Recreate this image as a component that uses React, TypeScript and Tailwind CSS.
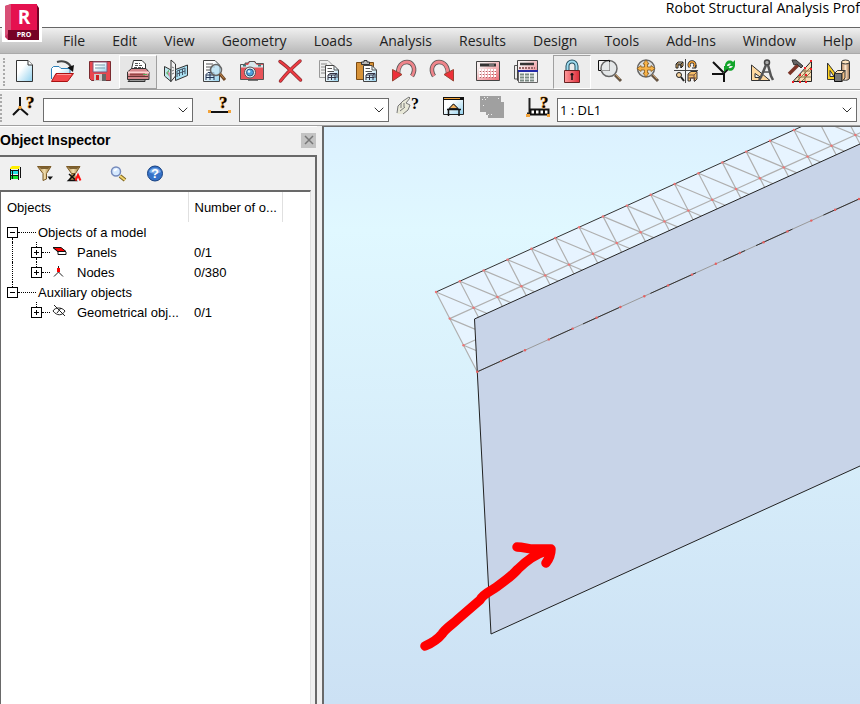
import { ReactNode, useState } from "react";
import { ChevronDown } from "lucide-react";

const MENUS = [
  "File", "Edit", "View", "Geometry", "Loads", "Analysis", "Results",
  "Design", "Tools", "Add-Ins", "Window", "Help",
];

const page = (
  <>
    <path d="M4.5 1.5H16L20.500 6V22.500H4.500Z" fill="url(#paper)" stroke="#333" />
    <path d="M16 1.500V6H20.500" fill="#fff" stroke="#333" />
  </>
);

const miniPage = (
  <>
    <path d="M9.500 6.500H18L22.500 11V22.500H9.500Z" fill="url(#paper)" stroke="#444" />
    <path d="M18 6.500V11H22.500M11.500 9.500H16M11.500 12.500H18" fill="none" stroke="#555" />
    <path d="M12 21V16L14 14.500H21L19 16V21M12 16H19M12 18.500H20M15.500 16V21M21 14.500V19" fill="none" stroke="#334" />
  </>
);

const calculator = (
  <>
    <path d="M.500 2.500H23.500V21.500H.500Z" fill="url(#rose)" stroke="#444" />
    <path d="M4 6H20" stroke="#333" strokeWidth="3" />
    <path d="M13 6H18" stroke="#aaa" />
    <path d="M3 11H21M3 14H21M3 17H21" stroke="#fff" strokeWidth="2" strokeDasharray="2 1" />
    <path d="M4 12.500H21M4 15.500H21M4 18.500H21" stroke="#a66" strokeDasharray="1 2" />
  </>
);

const triangleRule = (
  <path fillRule="evenodd" d="M1.500 6V21.500H20ZM5 14.500V18.500H11Z" fill="#ffd9a0" stroke="#333" />
);

const question = (
  <text x="14" y="13" fontFamily="Liberation Serif, serif" fontWeight="bold" fontSize="17" fill="#000" stroke="#f2a33a" strokeWidth="1" paintOrder="stroke">?</text>
);

const ICONS: Record<string, ReactNode> = {
  New: page,
  Open: (
    <>
      <path d="M1.500 20V9.500L3.500 7.500H9L11 9.500H20V16" fill="url(#paper)" stroke="#2a7fb8" />
      <path d="M6 14.500H23.500L17.500 22.500H1.500Z" fill="#f3474b" stroke="#a11" />
      <path d="M7 15.500H21" stroke="#ff9a9a" />
      <path d="M7 3C13 1 19 3 21.500 9" fill="none" stroke="#444" strokeWidth="2" />
      <path d="M17.500 8.500L24 6L23 13Z" fill="#111" />
    </>
  ),
  Save: (
    <>
      <path d="M1.500 2.500H22.500V21.500H3.500L1.500 19.500Z" fill="#e9474f" stroke="#7b2b30" />
      <path d="M5 3H19V13H5Z" fill="url(#paper)" stroke="#857" />
      <path d="M7 6H17M7 9H17" stroke="#79a" />
      <path d="M6 15H18V22H6Z" fill="#ccc" />
      <path d="M8 16H11V21H8Z" fill="#c22" />
      <path d="M14 15H18V22H14Z" fill="#666" />
    </>
  ),
  Print: (
    <>
      <path d="M5.500 10L7.500 1.500H16L19.500 5V10Z" fill="#fff" stroke="#333" />
      <path d="M9 4.500H14M9 6.500H16M8 8.500H17" stroke="#555" strokeDasharray="3 1" />
      <path d="M1.500 13L5.500 9.500H20L23 13V20.500H1.500Z" fill="#d5888c" stroke="#333" />
      <path d="M2 13.500H23" stroke="#ffd3d3" strokeWidth="2" />
      <path d="M2 17.500H22" stroke="#633" />
      <path d="M4 20.500H19V22.500H2Z" fill="#999" stroke="#333" />
      <path d="M4 15.500H19" stroke="#944" strokeWidth="2" />
      <path d="M17 15.500H21" stroke="#5a5" />
    </>
  ),
  "Print Composition": (
    <>
      <path d="M.500 7.500L7 11V22.500L.500 17Z" fill="#bfe8ee" stroke="#333" />
      <path d="M2 14L5 10.500V17Z" fill="#5bc069" />
      <path d="M3 12L6 14V19Z" fill="#df8fb4" />
      <path d="M7 1L11.500 5V17L7 22.500Z" fill="#f3f3f3" stroke="#333" />
      <path d="M8 8L10 9M8 12L10 11M8 15L10 14" stroke="#777" />
      <path d="M11.500 10.500L23.500 6V16.500L11.500 21.500Z" fill="#a9dff0" stroke="#333" />
      <path d="M13 18V12L21 9V15M13 15L21 12M15.500 11V17M18.500 10V16" fill="none" stroke="#456" />
    </>
  ),
  Preview: (
    <>
      <path d="M1.500 1.500H13L17.500 6V22.500H1.500Z" fill="url(#paper)" stroke="#444" />
      <path d="M4 5H11M4 8H13M4 11H9" stroke="#555" />
      <path d="M4 21V15.500L6 13.500H12V21M4 16H12M4 18.500H12M8 14V21" fill="none" stroke="#235" />
      <circle cx="14" cy="11" r="5.500" fill="#bde3f4" fillOpacity=".75" stroke="#666" strokeWidth="1.500" />
      <path d="M18 15L23 21" stroke="#6d4524" strokeWidth="3" />
      <path d="M18 14.500L22 19.500" stroke="#c78b4e" />
    </>
  ),
  "Screen Capture": (
    <>
      <path d="M.500 5.500H5V4H8L9 2.500H15L16 4.500H23.500V20.500H.500Z" fill="#e8545a" stroke="#555" />
      <path d="M1 6H8L10 3H14L17 6H23V8.500H1Z" fill="#d6e9ee" />
      <path d="M3 6.500H6M18 6.500H21" stroke="#477" strokeWidth="2" />
      <circle cx="10" cy="13.500" r="5.500" fill="#e9eef2" stroke="#555" />
      <circle cx="10" cy="13.500" r="3.500" fill="#4f9fdb" stroke="#27567d" />
      <circle cx="9" cy="12.500" r="1.300" fill="#dff6ff" />
      <path d="M8 21.500H18" stroke="#777" />
    </>
  ),
  Delete: (
    <>
      <path d="M2 2.500C9 7 15 14 22.500 21M22 2C14 9 7 16 2.500 22" fill="none" stroke="#8e3035" strokeWidth="3.500" strokeLinecap="round" />
      <path d="M2 2.500C9 7 15 14 22.500 21M22 2C14 9 7 16 2.500 22" fill="none" stroke="#ef3b42" strokeWidth="2" strokeLinecap="round" />
    </>
  ),
  Copy: (
    <>
      <path d="M3.500 1.500H12L16.500 6V18.500H3.500Z" fill="#eee" stroke="#999" />
      <path d="M5 5H11M5 8H9M5 11H9M5 14H9" stroke="#888" />
      {miniPage}
    </>
  ),
  Paste: (
    <>
      <path d="M2.500 3.500H19.500V20.500H2.500Z" fill="#d79238" stroke="#7b4a12" />
      <path d="M7.500 5.500V3H10V1.500H13V3H15.500V5.500Z" fill="#bbb" stroke="#333" />
      {miniPage}
    </>
  ),
  Undo: (
    <>
      <path d="M6 15C6 7 10 3 15 3C20 3 25 9 20 17" fill="none" stroke="#555" strokeWidth="4.500" />
      <path d="M6 15C6 7 10 3 15 3C20 3 25 9 20 17" fill="none" stroke="#ef858b" strokeWidth="2.800" />
      <path d="M.500 10.500L10 15.500L.500 22Z" fill="#ee3039" stroke="#943" />
    </>
  ),
  Redo: (
    <>
      <path d="M18 15C18 7 14 3 9 3C4 3 -1 9 4 17" fill="none" stroke="#555" strokeWidth="4.500" />
      <path d="M18 15C18 7 14 3 9 3C4 3 -1 9 4 17" fill="none" stroke="#ef858b" strokeWidth="2.800" />
      <path d="M23.500 10.500L14 15.500L23.500 22Z" fill="#ee3039" stroke="#943" />
    </>
  ),
  Calculations: calculator,
  "Calculation Parameters": (
    <>
      <path d="M.500 6.500H17V20H.500Z" fill="#eee" stroke="#555" />
      <path d="M3.500 1.500H23.500V21.500H3.500Z" fill="url(#rose)" stroke="#444" />
      <path d="M6 5H20" stroke="#333" strokeWidth="2.500" />
      <path d="M5 9H21" stroke="#966" strokeWidth="2" strokeDasharray="2 1" />
      <path d="M4.500 12.500H23.500V23.500H4.500Z" fill="#f4f4f4" stroke="#666" />
      <path d="M4 12H24" stroke="#2429a8" strokeWidth="2" />
      <path d="M6 15.500H20M6 18.500H20M6 21.500H20" stroke="#7a8a83" strokeWidth="2" strokeDasharray="4 1" />
    </>
  ),
  "Structure Lock": (
    <>
      <path d="M7.500 12V7C7.500 1 16.500 1 16.500 7V12" fill="none" stroke="#234c5c" strokeWidth="4" />
      <path d="M7.500 12V7C7.500 1 16.500 1 16.500 7V12" fill="none" stroke="#9fdcf0" strokeWidth="2" />
      <path d="M4.500 11.500H19.500V23.500H4.500Z" fill="url(#lock)" stroke="#622" />
      <path d="M12 14V21M10.500 15.500H13.500" stroke="#111" strokeWidth="1.500" />
    </>
  ),
  "Zoom Window": (
    <>
      <circle cx="11" cy="9.500" r="8" fill="#e4e7e8" stroke="#666" strokeWidth="1.500" />
      <path d="M.500 1.500H11.500V11.500H.500Z" fill="none" stroke="#111" />
      <path d="M11.500 3V11.500H3" fill="none" stroke="#999" />
      <path d="M17 16L23 22" stroke="#654" strokeWidth="3" />
      <path d="M17.500 15.500L22 20" stroke="#c79b62" />
    </>
  ),
  "Zoom All": (
    <>
      <circle cx="10" cy="9.500" r="8.500" fill="#dde1e3" stroke="#666" strokeWidth="1.500" />
      <path d="M10 1L13 5H11.500V8H15V6.500L19 9.500L15 12.500V11H11.500V14H13L10 18L7 14H8.500V11H5V12.500L1 9.500L5 6.500V8H8.500V5H7Z" fill="#f7b348" stroke="#865b20" strokeWidth=".8" />
      <path d="M16 16L22 22" stroke="#654" strokeWidth="3" />
      <path d="M16.500 15.500L21 20" stroke="#c79b62" />
    </>
  ),
  "Dynamic View": (
    <>
      <path d="M0 11.500H24M11.500 0V24" stroke="#444" />
      <path d="M2 9V5L4 3H9V7L7 9V6H4V9ZM2 5H7L9 3M7 5V9" fill="#f6be68" stroke="#222" />
      <path d="M16 8A3 3 0 1 1 20 8" fill="none" stroke="#222" strokeWidth="3" />
      <path d="M16 8A3 3 0 1 1 20 8" fill="none" stroke="#f6a338" strokeWidth="1.500" />
      <path d="M18 9H22V6" fill="none" stroke="#222" />
      <circle cx="5" cy="16" r="2.500" fill="#f8d39b" stroke="#222" />
      <path d="M7 18L10 22" stroke="#222" strokeWidth="2" />
      <path d="M14 22V15L17 12.500H23V20L20.500 22.500V19H16.500V22Z" fill="#f6be68" stroke="#333" />
      <path d="M14 16H20L23 13M14 19H22M20 16V22" fill="none" stroke="#754" />
    </>
  ),
  Redraw: (
    <>
      <path d="M1 3L11.500 13.500M0 15H12V23M12 14L17 9" fill="none" stroke="#111" strokeWidth="2" />
      <path d="M13 7C13 2 18 0 21 3L23 1V7H17L19 5C17 4 15 5 15 7Z" fill="#12a52a" />
      <path d="M23 6C23 11 18 14 15 10L12 13V7H18L16 9C19 10 21 8 21 6Z" fill="#12a52a" />
    </>
  ),
  "Edit Structure": (
    <>
      {triangleRule}
      <circle cx="17" cy="3.500" r="2.500" fill="#aaa" stroke="#444" strokeWidth="1.500" />
      <path d="M16 6L11 18L9 21M18 6L21 17L23 21" fill="none" stroke="#555" strokeWidth="2.500" />
      <path d="M13 13H20" stroke="#555" strokeWidth="1.500" />
    </>
  ),
  "Structure Repair": (
    <>
      <path d="M5 22.500L23.500 2V22.500Z" fill="#f7ddb5" stroke="#222" />
      <path d="M9 18H23M15 12H23M11 16V22M17 9V22M9 22L23 8M14 22L23 13" stroke="#8b7448" fill="none" />
      <path d="M4 22H6V24H4ZM11 15H13V17H11ZM16 8H18V10H16ZM22 1H24V3H22ZM22 9H24V11H22ZM11 22H13V24H11ZM17 22H19V24H17ZM17 15H19V17H17Z" fill="#ef2026" />
      <path d="M1 15L11 5" stroke="#7b3427" strokeWidth="3.500" />
      <path d="M4 1L8 1L15 7L13 9L9 5L6 6Z" fill="#666" stroke="#333" />
    </>
  ),
  Tables: (
    <>
      <path fillRule="evenodd" d="M1.500 4V20.500H14ZM4 11.500V17.500H8Z" fill="#ffd21f" stroke="#333" />
      <path d="M15.500 3V19C15.500 22 23.500 22 23.500 19V3" fill="url(#wood)" stroke="#333" />
      <ellipse cx="19.500" cy="3" rx="4" ry="2" fill="#ffe3be" stroke="#333" />
      <path d="M8.500 14.500H16V22.500H8.500Z" fill="#777" stroke="#111" />
      <path d="M8.500 14.500L11.500 11.500H19L16 14.500Z" fill="#ffe1bc" stroke="#333" />
      <path d="M16 14.500L19 11.500V19L16 22.500Z" fill="#f4bf84" stroke="#333" />
    </>
  ),
  "Node Selection": (
    <>
      <path d="M8 2V13L1 20M8 13L16 20" fill="none" stroke="#111" strokeWidth="2" />
      <path d="M6.500 11H9.500V14H6.500Z" fill="#f2a33a" />
      {question}
    </>
  ),
  "Bar Selection": (
    <>
      <path d="M0 17H23" stroke="#111" strokeWidth="2" />
      <path d="M0 15H3V18H0ZM20 15H23V18H20Z" fill="#f2a33a" />
      <text x="11" y="13" fontFamily="Liberation Serif, serif" fontWeight="bold" fontSize="17" fill="#000" stroke="#f2a33a" strokeWidth="1" paintOrder="stroke">?</text>
    </>
  ),
  "Object Selection": (
    <>
      <path d="M1 19L2 11L7 6L13 2L14 3L10 8L14 10L12 15L8 19Z" fill="#e8e8d8" />
      <path d="M1 18L2 11L7 6L13 2L14 3L10 8M5 13V8M8 12V8M10 8L14 10L12 15L7 19M4 16L9 12" fill="none" stroke="#777" />
      <text x="15" y="14" fontFamily="Liberation Serif, serif" fontWeight="bold" fontSize="16">?</text>
    </>
  ),
  "View Selection": (
    <>
      <path d="M1.500 2.500H21.500V19.500H1.500Z" fill="url(#paper)" stroke="#222" />
      <path d="M1 3.500H22" stroke="#111" strokeWidth="3" />
      <path d="M2 3.500H18" stroke="#f2a33a" />
      <path d="M6.500 21V15L11.500 9.500L17 15V21M5 14.500H19" fill="none" stroke="#111" strokeWidth="1.500" />
      <path d="M7 13.500H16L11.500 9Z" fill="#f6b35d" stroke="#222" />
    </>
  ),
  "Attribute Selection": (
    <>
      <path d="M0 1H21V7H24V23H8V20H6V17H0Z" fill="#a0a0a0" />
      <path d="M2 4.500H8M4 2.500H10M3 10.500H5M8 19.500H12M18 3.500H20" stroke="#eee" strokeDasharray="1 2" />
    </>
  ),
  "Case Selection": (
    <>
      <path d="M3.500 3V18M1 18.500H22" stroke="#222" strokeWidth="2" />
      <path d="M4.500 14.500H22.500V19.500H4.500Z" fill="#fff" stroke="#111" strokeWidth="2" />
      <path d="M9 15V20M13.500 15V20M18 15V20" stroke="#111" strokeWidth="2" />
      <path d="M0 19H4V22H0ZM21 19H24V22H21Z" fill="#f2a33a" />
      {question}
    </>
  ),
};

const MAIN_TOOLS = [
  ["New", "Open", "Save", "Print", "Print Composition", "Preview", "Screen Capture", "Delete", "Copy", "Paste", "Undo", "Redo"],
  ["Calculations", "Calculation Parameters"],
  ["Structure Lock", "Zoom Window", "Zoom All", "Dynamic View", "Redraw", "Edit Structure", "Structure Repair", "Tables"],
];

function ToolButton({ name, disabled = false }: { name: string; disabled?: boolean }) {
  const look =
    name === "Print"
      ? "bg-[#e6e6e6] border-white border-r-[#a0a0a0] border-b-[#a0a0a0]"
      : name === "Structure Lock"
        ? "bg-[#ececec] border-[#a0a0a0] border-r-white border-b-white"
        : "border-transparent";
  return (
    <button
      type="button"
      aria-label={name}
      title={name}
      disabled={disabled}
      className={`flex h-[34px] w-[38px] shrink-0 justify-center border pt-[3px] ${look}`}
    >
      <svg viewBox="0 0 24 24" className="size-6 overflow-visible" aria-hidden="true">{ICONS[name]}</svg>
    </button>
  );
}

function Combo({ label, options, className }: { label: string; options: string[]; className: string }) {
  return (
    <div className={`relative mt-[3px] h-6 ${className}`}>
      <select
        aria-label={label}
        className="block h-full w-full appearance-none border border-[#6d6d6d] bg-white pl-0.5 font-['Open_Sans',sans-serif] text-[13px] leading-5 text-black outline-none"
      >
        {options.map((option) => (
          <option key={option}>{option}</option>
        ))}
      </select>
      <ChevronDown className="pointer-events-none absolute top-1 right-0.5 size-4 text-[#333]" strokeWidth={1.5} />
    </div>
  );
}

function Logo() {
  return (
    <div className="absolute top-0 left-0.5 z-10 bg-white pt-1 pr-[3px] pb-0.5 pl-[3px]">
      <svg viewBox="0 0 34 36" className="h-9 w-[34px]" role="img" aria-label="Robot Pro">
        <path d="M0 2L6 0V26L3 36L0 33Z" fill="#c4315d" />
        <path d="M0 2L6 0V26L0 33Z" fill="#d84f76" />
        <path d="M6 0H32V26H6Z" fill="#e5114f" />
        <path d="M3 26H34V36H3Z" fill="#760225" />
        <path d="M32 1L34 4V36H32Z" fill="#760225" />
        <text x="19" y="20" textAnchor="middle" fontFamily="Open Sans, sans-serif" fontWeight="bold" fontSize="19" fill="#fff">R</text>
        <text x="19" y="33" textAnchor="middle" fontFamily="Open Sans, sans-serif" fontWeight="bold" fontSize="7" fill="#fff">PRO</text>
      </svg>
    </div>
  );
}

const INSPECTOR_TOOLS: { name: string; className: string; icon: ReactNode }[] = [
  {
    name: "Object properties",
    className: "w-[30px]",
    icon: (
      <>
        <path d="M4 3L6 1H14L13 4H4Z" fill="#ffef00" />
        <path d="M5 6H13V9H5Z" fill="#22dce8" />
        <path d="M5 11H13V14H5Z" fill="#12e02f" />
        <path d="M4.500 4V15M12.500 4V15M14.500 2V13M6.500 6V14M5 5.500H13M5 10.500H13" stroke="#111" />
      </>
    ),
  },
  {
    name: "Filter",
    className: "w-[30px]",
    icon: (
      <>
        <path d="M1.500 1.500H15L10.500 8.500V14L7 15.500V8.500Z" fill="url(#brass)" stroke="#7b5a26" />
        <path d="M3 2H14L12 4H5Z" fill="#7d6132" />
        <path d="M11.500 11.500H17L14 15Z" fill="#111" />
      </>
    ),
  },
  {
    name: "Filter selection",
    className: "w-[30px]",
    icon: (
      <>
        <path d="M.500 1.500H14L9.500 8.500H5.500Z" fill="url(#brass)" stroke="#7b5a26" />
        <path d="M2 2H13L11 4H4Z" fill="#7d6132" />
        <path d="M3 15.500L5 9H9L11 15.500Z" fill="#b8955a" />
        <path d="M3 9L10 15.500H2.500L9 9" fill="none" stroke="#111" strokeWidth="1.500" />
        <path d="M9.500 15.500L12 10L14.500 15.500" fill="none" stroke="#f11" strokeWidth="2" />
      </>
    ),
  },
  {
    name: "Find",
    className: "ml-3.5 w-[30px]",
    icon: (
      <>
        <path d="M10 11L15 15" stroke="#7a6220" strokeWidth="4" />
        <path d="M10 11L15 15" stroke="#f2d46b" strokeWidth="2" />
        <circle cx="6" cy="6.500" r="4.500" fill="#d5e9ff" stroke="#7489ba" strokeWidth="1.500" />
        <path d="M4 6L7 4" stroke="#fff" strokeWidth="2" />
      </>
    ),
  },
  {
    name: "Help topics",
    className: "ml-1.5 w-[30px]",
    icon: (
      <>
        <circle cx="9" cy="8.500" r="7.500" fill="#3572c8" stroke="#164080" />
        <path d="M3 7A6.500 6.500 0 0 1 15 7C12 9 6 9 3 7Z" fill="#78a9e5" />
        <text x="9" y="13" textAnchor="middle" fontFamily="Liberation Sans, sans-serif" fontWeight="bold" fontSize="13" fill="#fff">?</text>
      </>
    ),
  },
];

type TreeRow = { label: string; count?: string; icon?: ReactNode; lastChild?: boolean; rail?: boolean };

const ROWS: TreeRow[] = [
  { label: "Objects of a model" },
  {
    label: "Panels",
    count: "0/1",
    rail: true,
    icon: (
      <>
        <path d="M1 2.500L6 7V9.500H14V7" fill="#fff" stroke="#111" />
        <path d="M1 2.500H9L14 6.500H6Z" fill="#f00" stroke="#111" />
      </>
    ),
  },
  {
    label: "Nodes",
    count: "0/380",
    rail: true,
    lastChild: true,
    icon: (
      <>
        <path d="M6.500 1V7L2 11.500M6.500 7L11 11.500" fill="none" stroke="#222" />
        <path d="M5 3H8V7H5Z" fill="#f00" />
      </>
    ),
  },
  { label: "Auxiliary objects" },
  {
    label: "Geometrical obj...",
    count: "0/1",
    lastChild: true,
    icon: <path d="M2 0L13 11M1 6C3 2 10 2 13 6C10 11 5 11 1 6ZM9 3L5 8" fill="none" stroke="#222" />,
  },
];

function Toggle({ open, above, below, onClick, label }: { open: boolean; above: boolean; below: boolean; onClick?: () => void; label: string }) {
  return (
    <span className="flex h-5 w-[11px] shrink-0 flex-col items-center">
      <span className={`w-px flex-1 border-l border-dotted ${above ? "border-black" : "border-transparent"}`} />
      <button
        type="button"
        aria-label={`${open ? "Collapse" : "Expand"} ${label}`}
        onClick={onClick}
        className="relative size-[11px] shrink-0 border border-black bg-white"
      >
        <span className="absolute top-1 left-0.5 h-px w-[5px] bg-black" />
        {!open && <span className="absolute top-0.5 left-1 h-[5px] w-px bg-black" />}
      </button>
      <span className={`w-px flex-1 border-l border-dotted ${below ? "border-black" : "border-transparent"}`} />
    </span>
  );
}

function ObjectTree() {
  const [closed, setClosed] = useState<string[]>([]);

  function toggle(label: string) {
    setClosed((prev) => (prev.includes(label) ? prev.filter((item) => item !== label) : [...prev, label]));
  }

  let group = "";
  return (
    <table className="w-full table-fixed border-collapse text-left text-[13px] leading-5 text-black">
      <thead>
        <tr className="h-[30px]">
          <th className="w-[187px] border-r border-[#e0e0e0] p-0 pt-0.5 pl-1.5 font-normal">Objects</th>
          <th className="w-[94px] border-r border-[#e0e0e0] p-0 pt-0.5 pl-1.5 font-normal">Number of o...</th>
          <th />
        </tr>
      </thead>
      <tbody>
        {ROWS.map((row) => {
          const isGroup = !row.icon;
          if (isGroup) group = row.label;
          if (!isGroup && closed.includes(group)) return null;
          return (
            <tr key={row.label} className="h-5">
              <td className="p-0">
                {isGroup ? (
                  <div className="flex h-5 items-center pl-1.5">
                    <Toggle
                      label={row.label}
                      open={!closed.includes(row.label)}
                      above={row.label === "Auxiliary objects"}
                      below={row.label === "Objects of a model"}
                      onClick={() => toggle(row.label)}
                    />
                    <span className="mr-0.5 w-[18px] border-t border-dotted border-black" />
                    <span className="pt-0.5">{row.label}</span>
                  </div>
                ) : (
                  <div className="flex h-5 items-center pl-[11px]">
                    <span className={`h-5 w-[19px] border-l border-dotted ${row.rail ? "border-black" : "border-transparent"}`} />
                    <Toggle label={row.label} open={false} above below={!row.lastChild} />
                    <span className="mr-0.5 w-2 border-t border-dotted border-black" />
                    <svg viewBox="0 0 15 15" className="mr-2.5 size-[15px]" aria-hidden="true">{row.icon}</svg>
                    <span className="pt-0.5">{row.label}</span>
                  </div>
                )}
              </td>
              <td className="p-0 pl-1.5">
                <div className="h-5 pt-px">{row.count}</div>
              </td>
              <td />
            </tr>
          );
        })}
      </tbody>
    </table>
  );
}

// mesh node at column i along the wall, row j down the slab
const node = (i: number, j: number) => [112 + i * 23.86 + j * 13.75, 165 - i * 10.8 + j * 26.6];
const COLS = Array.from({ length: 19 }, (_, i) => i);

function ModelView() {
  const segment = (a: number[], b: number[]) => `M${a[0]} ${a[1]}L${b[0]} ${b[1]}`;
  const mesh = COLS.flatMap((i) => [
    segment(node(i, 0), node(i, 3)),
    segment(node(i, 0), node(i + 3, 3)),
    i < 3 ? segment(node(0, i), node(3 - i, 3)) : "",
  ]).join("");
  const rows = [1, 2].map((j) => segment(node(0, j), node(19, j))).join("");
  const dots = COLS.flatMap((i) => [node(i, 0), node(i, 1)]).concat([node(0, 2)]);

  return (
    <svg viewBox="0 0 536 577" preserveAspectRatio="xMinYMin slice" className="block h-full w-full" role="img" aria-label="Structure model">
      <path d={`M${node(0, 0)}L${node(19, 0)}L${node(19, 3)}L${node(0, 3)}Z`} fill="#e7f4ff" />
      <path d={mesh + rows} fill="none" stroke="#b0b0b0" strokeWidth="1.200" />
      <path d={segment(node(0, 0), node(19, 0))} stroke="#333" />
      {dots.map(([x, y]) => (
        <circle key={`${x} ${y}`} cx={x} cy={y} r="1.200" fill="#ee7676" />
      ))}
      <path d="M536 17L150.500 192L167 507L536 339" fill="#c8d4e8" stroke="#222" />
      <path d={segment(node(0, 3), node(18, 3))} stroke="#999" />
      <path d={segment(node(0, 3), node(18, 3))} stroke="#333" strokeDasharray="50 30 24 12 40 34" />
      {COLS.map((i) => node(i, 3)).map(([x, y]) => (
        <circle key={x} cx={x} cy={y} r="1.200" fill="#e86060" />
      ))}
      <path
        d="M101 519C108 516 114 512 118 507C122 501 128 498 134 492C142 485 149 479 156 473C159 467 165 465 171 461C178 456 187 450 194 442C201 435 209 428 222 424M193 420C200 420 204 422 210 422H227C227 428 225 432 222 436"
        fill="none"
        stroke="#f00"
        strokeWidth="9.500"
        strokeLinecap="round"
        strokeLinejoin="round"
      />
    </svg>
  );
}

function Gradients() {
  return (
    <svg className="absolute size-0" aria-hidden="true">
      <defs>
        <linearGradient id="paper" x1="0" y1="0" x2="1" y2="1">
          <stop offset=".35" stopColor="#fff" />
          <stop offset="1" stopColor="#8fd0ee" />
        </linearGradient>
        <linearGradient id="rose" x1="0" y1="0" x2="1" y2="1">
          <stop offset=".2" stopColor="#f6eeee" />
          <stop offset="1" stopColor="#ee6a72" />
        </linearGradient>
        <linearGradient id="lock" x1="0" y1="0" x2="1" y2="0">
          <stop offset="0" stopColor="#ff9a9c" />
          <stop offset="1" stopColor="#dc2c38" />
        </linearGradient>
        <linearGradient id="wood" x1="0" y1="0" x2="1" y2="0">
          <stop offset="0" stopColor="#b08460" />
          <stop offset=".5" stopColor="#ffe6cb" />
          <stop offset="1" stopColor="#9b6f4c" />
        </linearGradient>
        <linearGradient id="brass" x1="0" y1="0" x2="1" y2="0">
          <stop offset="0" stopColor="#a27c3c" />
          <stop offset=".5" stopColor="#f3dfae" />
          <stop offset="1" stopColor="#94702f" />
        </linearGradient>
      </defs>
    </svg>
  );
}

export default function App() {
  return (
    <div className="relative flex h-screen flex-col overflow-hidden bg-[#f0f0f0] font-['Liberation_Sans',Arial,sans-serif] text-black">
      <Gradients />
      <Logo />
      <header className="flex h-[27px] shrink-0 justify-end bg-white">
        <h1 className="font-['Open_Sans',sans-serif] text-sm leading-4 whitespace-nowrap">
          Robot Structural Analysis Prof
        </h1>
      </header>
      <nav className="flex h-[27px] shrink-0 items-center gap-[27px] border-t border-b border-t-[#666] border-b-[#aaa] bg-linear-to-b from-[#f0f0f0] to-[#b9b9b9] pl-[63px] font-['Open_Sans',sans-serif] text-sm text-[#222]">
        {MENUS.map((menu) => (
          <button key={menu} type="button" className="shrink-0">{menu}</button>
        ))}
      </nav>

      <div role="toolbar" aria-label="Standard" className="flex h-9 shrink-0 items-center gap-2 border-b border-[#a0a0a0] pl-[3px]">
        <div className="-mr-2 h-7 w-0.5 border-l-2 border-dotted border-[#aaa]" />
        {MAIN_TOOLS.map((group) => (
          <div key={group[0]} className="flex">
            {group.map((name) => (
              <ToolButton key={name} name={name} />
            ))}
          </div>
        ))}
      </div>
      <div role="toolbar" aria-label="Selection" className="flex h-[35px] shrink-0 items-center border-t border-white pr-[3px]">
        <div className="mr-[3px] h-7 w-0.5 border-l-2 border-dotted border-[#aaa]" />
        <ToolButton name="Node Selection" />
        <Combo label="Nodes" options={[""]} className="mr-2 w-[150px] shrink-0" />
        <ToolButton name="Bar Selection" />
        <Combo label="Bars" options={[""]} className="w-[150px] shrink-0" />
        <div className="mr-2"><ToolButton name="Object Selection" /></div>
        <ToolButton name="View Selection" />
        <div className="mr-2"><ToolButton name="Attribute Selection" disabled /></div>
        <ToolButton name="Case Selection" />
        <Combo label="Load case" options={["1 : DL1"]} className="min-w-0 flex-1" />
      </div>

      <div className="flex min-h-0 flex-1 border-t border-[#a0a0a0]">
        <aside className="mr-[5px] flex w-[317px] shrink-0 flex-col">
          <div className="flex h-[29px] items-center justify-between border-t border-white pr-px pb-0.5">
            <h2 className="text-sm font-bold">Object Inspector</h2>
            <button type="button" aria-label="Close" className="flex size-[15px] items-center justify-center bg-[#c3c3c3]">
              <svg viewBox="0 0 10 10" className="size-2.5" aria-hidden="true">
                <path d="M1 1L9 9M9 1L1 9" stroke="#777" strokeWidth="1.500" />
              </svg>
            </button>
          </div>
          <div className="flex min-h-0 flex-1 flex-col border-t-2 border-r-2 border-[#696969] pr-1">
            <div role="toolbar" aria-label="Inspector" className="flex h-[33px] shrink-0 items-center">
              {INSPECTOR_TOOLS.map((tool) => (
                <button key={tool.name} type="button" aria-label={tool.name} className={`flex justify-center ${tool.className}`}>
                  <svg viewBox="0 0 18 18" className="size-[18px]" aria-hidden="true">{tool.icon}</svg>
                </button>
              ))}
            </div>
            <div className="min-h-0 flex-1 border-t-2 border-r border-l border-t-[#696969] border-r-[#e0e0e0] border-l-[#696969] bg-white">
              <ObjectTree />
            </div>
          </div>
        </aside>
        <main className="min-w-0 flex-1 border-t border-l-2 border-[#696969] bg-linear-to-b from-[#dcf1ff] via-[#e0f8ff] via-18% to-[#cce1f4]">
          <ModelView />
        </main>
      </div>
    </div>
  );
}
